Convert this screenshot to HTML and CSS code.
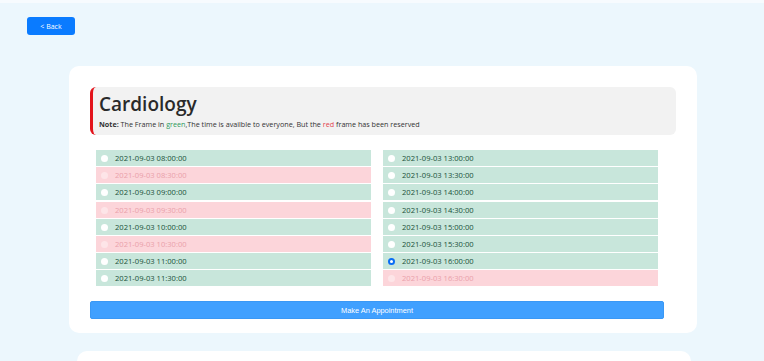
FILE: index.html
```html
<!DOCTYPE html>
<html lang="en">
<head>
	<meta charset="UTF-8">
	<title>Appointment</title>
	<link rel="stylesheet" href="styles.css">
</head>
<body>
	<div class="topline"></div>
	<div class="page">
		<button class="btn-back">&lt; Back</button>

		<div class="card">
			<div class="dept">
				<h2>Cardiology</h2>
				<p><b>Note:</b> The Frame in <span class="g">green</span>,The time is availble to everyone, But the <span class="r">red</span> frame has been reserved</p>
			</div>

			<div class="slots">
				<ul class="col">
					<li class="free"><i class="radio"></i>2021-09-03 08:00:00</li>
					<li class="taken"><i class="radio"></i>2021-09-03 08:30:00</li>
					<li class="free"><i class="radio"></i>2021-09-03 09:00:00</li>
					<li class="taken"><i class="radio"></i>2021-09-03 09:30:00</li>
					<li class="free"><i class="radio"></i>2021-09-03 10:00:00</li>
					<li class="taken"><i class="radio"></i>2021-09-03 10:30:00</li>
					<li class="free"><i class="radio"></i>2021-09-03 11:00:00</li>
					<li class="free"><i class="radio"></i>2021-09-03 11:30:00</li>
				</ul>
				<ul class="col">
					<li class="free"><i class="radio"></i>2021-09-03 13:00:00</li>
					<li class="free"><i class="radio"></i>2021-09-03 13:30:00</li>
					<li class="free"><i class="radio"></i>2021-09-03 14:00:00</li>
					<li class="free"><i class="radio"></i>2021-09-03 14:30:00</li>
					<li class="free"><i class="radio"></i>2021-09-03 15:00:00</li>
					<li class="free"><i class="radio"></i>2021-09-03 15:30:00</li>
					<li class="free"><i class="radio checked"></i>2021-09-03 16:00:00</li>
					<li class="taken"><i class="radio"></i>2021-09-03 16:30:00</li>
				</ul>
			</div>

			<button class="btn-make">Make An Appointment</button>
		</div>

		<div class="card card2"></div>
	</div>
</body>
</html>
```

FILE: styles.css
```css
*{margin:0;padding:0;box-sizing:border-box;}
ul{list-style:none;}
html,body{height:100%;overflow:hidden;}
body{background:#ecf7fd;font-family:"Open Sans","Noto Sans",sans-serif;color:#212529;}
.topline{height:3px;background:#f7fbfe;}
.page{padding:14px 0 0 27px;}
.btn-back{display:block;width:48px;height:18px;border:none;border-radius:3px;background:#0a7bff;color:#fff;font-family:inherit;font-size:7px;}

.card{width:628px;margin:31px 0 0 42px;background:#fff;border-radius:10px;padding:21px 21px 14px 21px;}
.card2{width:614px;height:9px;margin:18px 0 0 50px;border-radius:10px 10px 0 0;}

.dept{background:#f2f2f2;border-left:3px solid #e3141c;border-radius:6px;padding:6px 9px 5px 6px;height:48px;}
.dept h2{font-size:19px;font-weight:600;line-height:22px;color:#2a2a2a;}
.dept p{font-size:7.2px;line-height:10px;margin-top:4px;color:#333;}
.dept p b{font-weight:700;}
.dept .g{color:#2e9a60;}
.dept .r{color:#e2434e;}

.slots{display:flex;width:574px;margin-top:15px;}
.col{flex:1;padding:0 6px;display:flex;flex-direction:column;gap:1.2px;}
.col li{height:16px;display:flex;align-items:center;padding-left:5px;font-size:7.6px;}
.col li.free{background:#c8e6db;color:#19513a;}
.col li.taken{background:#fcd5da;color:#eaa1aa;}
.radio{width:7px;height:7px;border-radius:50%;background:#fff;margin:1px 7px 0 0;flex:none;}
.taken .radio{background:#fde5e8;}
.radio.checked{background:#fff;border:2px solid #0a6ef4;}

.btn-make{display:block;width:574px;height:18px;margin-top:15px;border:1px solid #3a98f5;border-radius:2px;background:#40a0ff;color:#fff;font-family:"Liberation Sans",sans-serif;font-size:7.4px;}
```
